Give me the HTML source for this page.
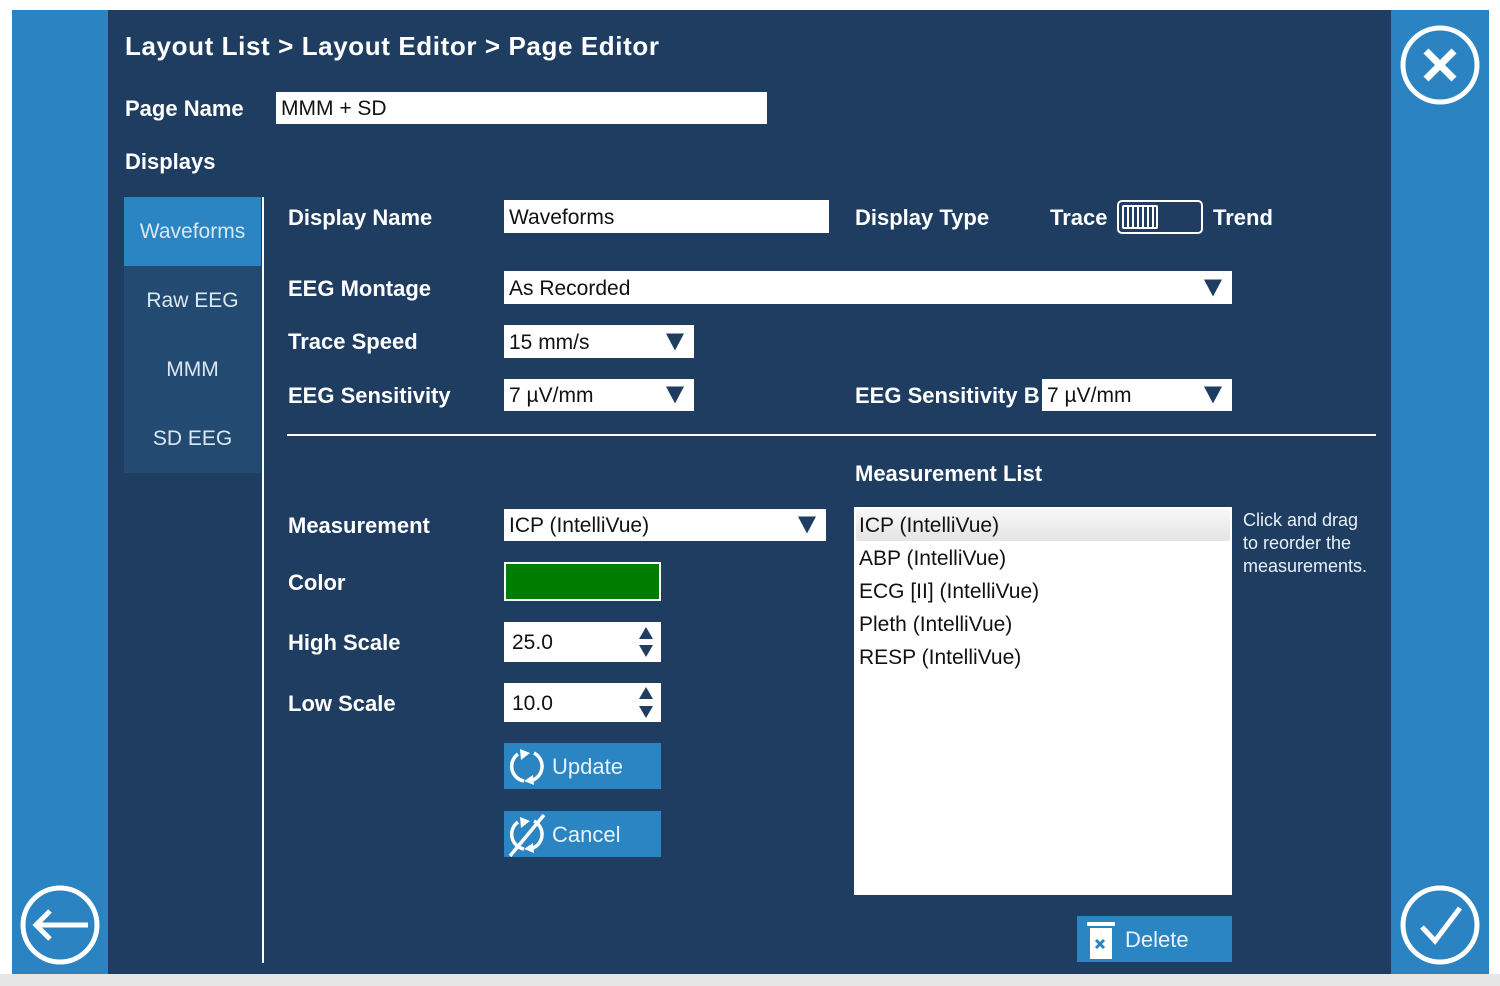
<!DOCTYPE html>
<html><head><meta charset="utf-8"><style>
*{margin:0;padding:0;box-sizing:border-box}
body{width:1500px;height:986px;background:#fff;position:relative;overflow:hidden;font-family:"Liberation Sans",sans-serif;color:#fff}
.a{position:absolute}
.lb{position:absolute;font-weight:bold;font-size:22px;color:#fff;line-height:1;transform:translateY(-50%)}
.in{position:absolute;background:#fff;color:#111;font-size:21px;padding-left:5px;padding-top:2px;display:flex;align-items:center}
.tri{position:absolute;right:10px;top:50%;transform:translateY(-50%);width:0;height:0;border-left:9px solid transparent;border-right:9px solid transparent;border-top:17px solid #1f3d60}
.btn{position:absolute;background:#2b85c3;color:#e8f2fa;font-size:22px;display:flex;align-items:center;padding-top:2px}
.tab{position:absolute;left:124px;width:137px;text-align:center;font-size:21px;color:#dbe7f2;display:flex;align-items:center;justify-content:center}
.li{position:absolute;left:859px;font-size:21px;color:#111;transform:translateY(-50%)}
</style></head><body>
<div class="a" style="left:0;top:974px;width:1500px;height:12px;background:#e6e6e6"></div>
<div class="a" style="left:12px;top:10px;width:96px;height:964px;background:#2b84c1"></div>
<div class="a" style="left:108px;top:10px;width:1283px;height:964px;background:#1f3d60"></div>
<div class="a" style="left:1391px;top:10px;width:98px;height:964px;background:#2b84c1"></div>

<div class="lb" style="left:125px;top:46px;font-size:26px;letter-spacing:0.6px">Layout List &gt; Layout Editor &gt; Page Editor</div>
<div class="lb" style="left:125px;top:109px">Page Name</div>
<div class="in" style="left:276px;top:92px;width:491px;height:32px">MMM + SD</div>
<div class="lb" style="left:125px;top:162px">Displays</div>

<div class="tab" style="top:197px;height:69px;background:#2b85c3">Waveforms</div>
<div class="tab" style="top:266px;height:69px;background:#234b72">Raw EEG</div>
<div class="tab" style="top:335px;height:69px;background:#234b72">MMM</div>
<div class="tab" style="top:404px;height:69px;background:#234b72">SD EEG</div>
<div class="a" style="left:262px;top:197px;width:2px;height:766px;background:#fff"></div>

<div class="lb" style="left:288px;top:218px">Display Name</div>
<div class="in" style="left:504px;top:200px;width:325px;height:33px">Waveforms</div>
<div class="lb" style="left:855px;top:218px">Display Type</div>
<div class="lb" style="left:1050px;top:218px">Trace</div>
<div class="a" style="left:1117px;top:200px;width:86px;height:34px;border:2px solid #fff;border-radius:5px">
 <div class="a" style="left:3px;top:3px;width:36px;height:24px;border:2px solid #fff;border-radius:2px;background:repeating-linear-gradient(90deg,#1f3d60 0 3px,#fff 3px 5px)"></div>
</div>
<div class="lb" style="left:1213px;top:218px">Trend</div>

<div class="lb" style="left:288px;top:289px">EEG Montage</div>
<div class="in" style="left:504px;top:271px;width:728px;height:33px">As Recorded<div class="tri"></div></div>
<div class="lb" style="left:288px;top:342px">Trace Speed</div>
<div class="in" style="left:504px;top:325px;width:190px;height:33px">15 mm/s<div class="tri"></div></div>
<div class="lb" style="left:288px;top:396px">EEG Sensitivity</div>
<div class="in" style="left:504px;top:379px;width:190px;height:32px">7 µV/mm<div class="tri"></div></div>
<div class="lb" style="left:855px;top:396px">EEG Sensitivity B</div>
<div class="in" style="left:1042px;top:379px;width:190px;height:32px">7 µV/mm<div class="tri"></div></div>
<div class="a" style="left:287px;top:434px;width:1089px;height:2px;background:#fff"></div>

<div class="lb" style="left:855px;top:474px">Measurement List</div>
<div class="lb" style="left:288px;top:526px">Measurement</div>
<div class="in" style="left:504px;top:509px;width:322px;height:32px">ICP (IntelliVue)<div class="tri"></div></div>
<div class="lb" style="left:288px;top:583px">Color</div>
<div class="a" style="left:504px;top:562px;width:157px;height:39px;background:#fff;padding:2px"><div style="width:100%;height:100%;background:#007d00"></div></div>
<div class="lb" style="left:288px;top:643px">High Scale</div>
<div class="in" style="left:504px;top:622px;width:157px;height:40px;padding-left:8px">25.0
 <div class="a" style="right:8px;top:5px;border-left:7px solid transparent;border-right:7px solid transparent;border-bottom:12px solid #1f3d60"></div>
 <div class="a" style="right:8px;bottom:5px;border-left:7px solid transparent;border-right:7px solid transparent;border-top:12px solid #1f3d60"></div></div>
<div class="lb" style="left:288px;top:704px">Low Scale</div>
<div class="in" style="left:504px;top:683px;width:157px;height:39px;padding-left:8px">10.0
 <div class="a" style="right:8px;top:4px;border-left:7px solid transparent;border-right:7px solid transparent;border-bottom:12px solid #1f3d60"></div>
 <div class="a" style="right:8px;bottom:4px;border-left:7px solid transparent;border-right:7px solid transparent;border-top:12px solid #1f3d60"></div></div>

<div class="btn" style="left:504px;top:743px;width:157px;height:46px">
<svg width="48" height="46" viewBox="0 0 48 46" style="flex:none"><g fill="none" stroke="#fff" stroke-width="3.5"><path d="M14 10 A15 15 0 0 0 20 37"/><path d="M30 9 A15 15 0 0 1 26 37"/></g><path d="M16 5 L26 9 L17 16Z M30 41 L20 37 L29 31Z" fill="#fff"/></svg>
<span>Update</span></div>
<div class="btn" style="left:504px;top:811px;width:157px;height:46px">
<svg width="48" height="46" viewBox="0 0 48 46" style="flex:none"><g fill="none" stroke="#fff" stroke-width="3.5"><path d="M14 10 A15 15 0 0 0 20 37"/><path d="M30 9 A15 15 0 0 1 26 37"/><path d="M6 44 L40 3"/></g><path d="M16 5 L26 9 L17 16Z M30 41 L20 37 L29 31Z" fill="#fff"/></svg>
<span>Cancel</span></div>

<div class="a" style="left:854px;top:507px;width:378px;height:388px;background:#fff"></div>
<div class="a" style="left:856px;top:509px;width:374px;height:32px;background:linear-gradient(#f8f8f8,#e4e4e4);border-radius:2px"></div>
<div class="li" style="top:526px">ICP (IntelliVue)</div>
<div class="li" style="top:559px">ABP (IntelliVue)</div>
<div class="li" style="top:592px">ECG [II] (IntelliVue)</div>
<div class="li" style="top:625px">Pleth (IntelliVue)</div>
<div class="li" style="top:658px">RESP (IntelliVue)</div>
<div class="a" style="left:1243px;top:509px;font-size:18px;line-height:23px;color:#e8f0f8">Click and drag<br>to reorder the<br>measurements.</div>

<div class="btn" style="left:1077px;top:916px;width:155px;height:46px">
<svg width="48" height="46" viewBox="0 0 48 46" style="flex:none"><rect x="10" y="5" width="28" height="4" rx="1" fill="#fff"/><path d="M13 11 H35 V42 H13Z" fill="#fff"/><path d="M19 23 L27 31 M27 23 L19 31" stroke="#2b85c3" stroke-width="3"/></svg>
<span>Delete</span></div>

<svg class="a" style="left:1398px;top:23px" width="84" height="84" viewBox="0 0 84 84"><circle cx="42" cy="42" r="37" fill="none" stroke="#fff" stroke-width="5"/><path d="M28 28 L56 56 M56 28 L28 56" stroke="#fff" stroke-width="7"/></svg>
<svg class="a" style="left:18px;top:883px" width="84" height="84" viewBox="0 0 84 84"><circle cx="42" cy="42" r="37" fill="none" stroke="#fff" stroke-width="5"/><path d="M18 42 H70 M32 28 L18 42 L32 56" fill="none" stroke="#fff" stroke-width="5"/></svg>
<svg class="a" style="left:1398px;top:883px" width="84" height="84" viewBox="0 0 84 84"><circle cx="42" cy="42" r="37" fill="none" stroke="#fff" stroke-width="5"/><path d="M24 44 L37 58 L62 25" fill="none" stroke="#fff" stroke-width="5"/></svg>
</body></html>
